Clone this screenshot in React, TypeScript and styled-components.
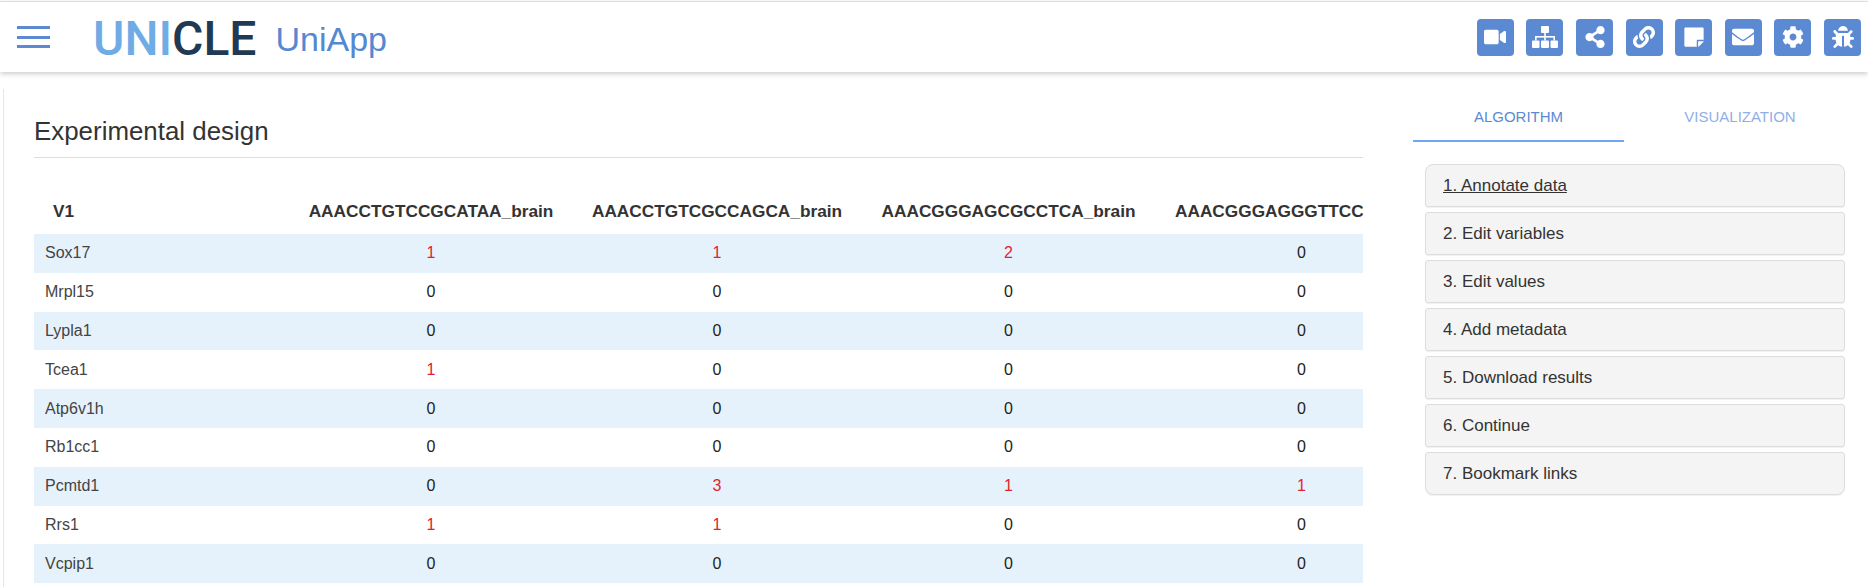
import React from 'react';
import styled, {createGlobalStyle} from 'styled-components';
import {FaVideo, FaShareAlt, FaLink, FaStickyNote, FaEnvelope, FaCog, FaBug} from 'react-icons/fa';

const GlobalStyle = createGlobalStyle`
  html, body {
    margin: 0;
    padding: 0;
    background: #fff;
    overflow: hidden;
    font-family: "Liberation Sans", Arial, sans-serif;
    color: #333;
  }
`

const Header = styled.header`
  box-sizing: border-box;
  height: 71px;
  margin-top: 1px;
  border-top: 1px solid #ddd;
  display: flex;
  align-items: center;
  justify-content: space-between;
  padding: 0 7px 0 17px;
  background: #fff;
  box-shadow: 0 2px 5px rgba(0, 0, 0, 0.2);
`

const Brand = styled.div`
  display: flex;
  align-items: center;
`

const Burger = styled.div`
  width: 33px;
  height: 22px;
  display: flex;
  flex-direction: column;
  justify-content: space-between;
  margin-right: 43px;
`

const BurgerBar = styled.span`
  height: 3px;
  background: #5b8ad2;
`

const Logo = styled.div`
  font-family: Roboto, "Liberation Sans", Arial, sans-serif;
  font-size: 48px;
  font-weight: 500;
  line-height: 50px;
  margin: 3px 19px 0 0;
  white-space: nowrap;
`

const LogoPart = styled.span<{$tone: string}>`
  color: ${p => p.$tone};
`

const AppName = styled.div`
  font-size: 34px;
  line-height: 40px;
  color: #5588d0;
  margin-top: 4px;
`

const Tools = styled.div`
  display: flex;
  gap: 12.6px;
`

const ToolButton = styled.div`
  width: 37px;
  height: 37px;
  border-radius: 4px;
  background: #5b8ad2;
  color: #fff;
  display: flex;
  align-items: center;
  justify-content: center;
  font-size: 22px;
`

const Main = styled.main`
  display: flex;
  margin: 17px 0 0 3px;
  border-left: 1px solid #e6e6e6;
  height: 498px;
  overflow: hidden;
`

const Content = styled.section`
  box-sizing: border-box;
  width: 1359px;
  flex: none;
  padding-left: 30px;
`

const Title = styled.h2`
  margin: 0;
  height: 69px;
  box-sizing: border-box;
  padding-top: 27px;
  font-size: 25.9px;
  line-height: 30px;
  font-weight: 400;
  color: #333;
  border-bottom: 1px solid #ddd;
`

const TableClip = styled.div`
  overflow: hidden;
  margin-top: 37px;
`

const Table = styled.table`
  table-layout: fixed;
  width: 1413px;
  border-collapse: collapse;
  font-size: 16px;
`

const Col = styled.col<{$width: number}>`
  width: ${p => p.$width}px;
`

const HeadCell = styled.th<{$first?: boolean}>`
  height: 39px;
  padding: 0 0 6px ${p => (p.$first ? '19px' : '0')};
  box-sizing: border-box;
  text-align: ${p => (p.$first ? 'left' : 'center')};
  font-size: 17.25px;
  font-weight: 700;
  color: #333;
  white-space: nowrap;
  overflow: hidden;
`

const Row = styled.tr`
  height: 38.8px;
  &:nth-child(odd) {
    background: #e6f2fb;
  }
`

const NameCell = styled.td`
  padding: 0 0 0 11px;
  color: #444;
`

const ValueCell = styled.td<{$hit: boolean}>`
  padding: 0;
  text-align: center;
  color: ${p => (p.$hit ? '#e0242f' : '#222')};
`

const Sidebar = styled.aside`
  box-sizing: border-box;
  width: 443px;
  margin-left: 50px;
  flex: none;
`

const Tabs = styled.div`
  display: grid;
  grid-template-columns: 211px 232px;
`

const Tab = styled.div<{$active?: boolean}>`
  box-sizing: border-box;
  height: 53px;
  padding-top: 20px;
  text-align: center;
  font-size: 15px;
  line-height: 16px;
  color: ${p => (p.$active ? '#5b8ad2' : '#8fb0e6')};
  border-bottom: 2px solid ${p => (p.$active ? '#6fa8f0' : 'transparent')};
`

const Steps = styled.div`
  display: flex;
  flex-direction: column;
  gap: 5px;
  margin: 22px 11px 0 12px;
`

const Step = styled.div<{$first?: boolean; $last?: boolean; $current?: boolean}>`
  box-sizing: border-box;
  height: 43px;
  padding-left: 17px;
  display: flex;
  align-items: center;
  background: #f4f4f4;
  border: 1px solid #ddd;
  border-radius: ${p => (p.$first ? '8px 8px 3px 3px' : p.$last ? '3px 3px 8px 8px' : '3px')};
  box-shadow: 0 1px 1px rgba(0, 0, 0, 0.06);
  font-size: 17px;
  color: #333;
  text-decoration: ${p => (p.$current ? 'underline' : 'none')};
`

const SitemapIcon = () => (
    <svg width="26" height="22" viewBox="0 0 26 22" fill="currentColor">
        <rect x="9" y="0" width="8" height="7" rx="1"/>
        <rect x="0" y="14.5" width="7.5" height="7.5" rx="1"/>
        <rect x="9" y="14.5" width="8" height="7.5" rx="1"/>
        <rect x="18.5" y="14.5" width="7.5" height="7.5" rx="1"/>
        <rect x="12.2" y="7" width="1.6" height="7.5"/>
        <rect x="3" y="10" width="20" height="1.6"/>
        <rect x="3" y="10" width="1.6" height="4.5"/>
        <rect x="21.4" y="10" width="1.6" height="4.5"/>
    </svg>
);

const columns = [255, 284, 288, 295, 291];
const headers = ['V1', 'AAACCTGTCCGCATAA_brain', 'AAACCTGTCGCCAGCA_brain', 'AAACGGGAGCGCCTCA_brain', 'AAACGGGAGGGTTCCC_brain'];
const rows: [string, number[]][] = [
    ['Sox17', [1, 1, 2, 0]],
    ['Mrpl15', [0, 0, 0, 0]],
    ['Lypla1', [0, 0, 0, 0]],
    ['Tcea1', [1, 0, 0, 0]],
    ['Atp6v1h', [0, 0, 0, 0]],
    ['Rb1cc1', [0, 0, 0, 0]],
    ['Pcmtd1', [0, 3, 1, 1]],
    ['Rrs1', [1, 1, 0, 0]],
    ['Vcpip1', [0, 0, 0, 0]],
];
const steps = ['1. Annotate data', '2. Edit variables', '3. Edit values', '4. Add metadata', '5. Download results', '6. Continue', '7. Bookmark links'];
const tools = [FaVideo, SitemapIcon, FaShareAlt, FaLink, FaStickyNote, FaEnvelope, FaCog, FaBug];

function App() {
    return (
        <>
            <GlobalStyle/>
            <Header>
                <Brand>
                    <Burger>
                        <BurgerBar/>
                        <BurgerBar/>
                        <BurgerBar/>
                    </Burger>
                    <Logo>
                        <LogoPart $tone="#6fabe5">UNI</LogoPart>
                        <LogoPart $tone="#1f3a52">CLE</LogoPart>
                    </Logo>
                    <AppName>UniApp</AppName>
                </Brand>
                <Tools>
                    {tools.map((Icon, i) => (
                        <ToolButton key={i}><Icon/></ToolButton>
                    ))}
                </Tools>
            </Header>
            <Main>
                <Content>
                    <Title>Experimental design</Title>
                    <TableClip>
                        <Table>
                            <colgroup>
                                {columns.map((w, i) => <Col key={i} $width={w}/>)}
                            </colgroup>
                            <thead>
                            <tr>
                                {headers.map((h, i) => <HeadCell key={h} $first={i === 0}>{h}</HeadCell>)}
                            </tr>
                            </thead>
                            <tbody>
                            {rows.map(([name, values]) => (
                                <Row key={name}>
                                    <NameCell>{name}</NameCell>
                                    {values.map((v, i) => <ValueCell key={i} $hit={v > 0}>{v}</ValueCell>)}
                                </Row>
                            ))}
                            </tbody>
                        </Table>
                    </TableClip>
                </Content>
                <Sidebar>
                    <Tabs>
                        <Tab $active>ALGORITHM</Tab>
                        <Tab>VISUALIZATION</Tab>
                    </Tabs>
                    <Steps>
                        {steps.map((s, i) => (
                            <Step key={s} $first={i === 0} $last={i === steps.length - 1} $current={i === 0}>{s}</Step>
                        ))}
                    </Steps>
                </Sidebar>
            </Main>
        </>
    );
}

export default App;
